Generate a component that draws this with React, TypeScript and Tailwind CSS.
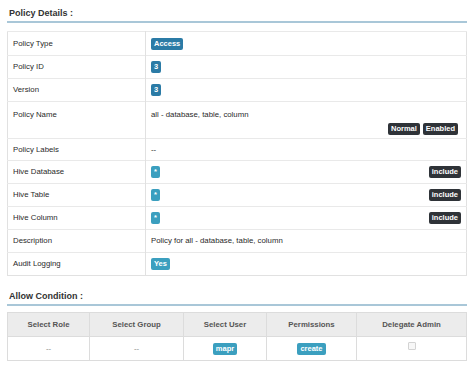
import React from "react";

const Badge = ({ children, tone }: { children: React.ReactNode; tone: "blue" | "teal" | "dark" }) => {
  const cls =
    tone === "blue" ? "bg-[#2b7ba6]" : tone === "teal" ? "bg-[#3b9fbf]" : "bg-[#2f3338]";
  return (
    <span className={`${cls} inline-block rounded-[2px] px-[3px] py-[2px] text-[7.5px] font-bold leading-[8px] text-white`}>
      {children}
    </span>
  );
};

type Row = { label: string; value: React.ReactNode; h: string; top?: boolean };

export default function App() {
  const rows: Row[] = [
    { label: "Policy Type", value: <Badge tone="blue">Access</Badge>, h: "h-[24px]" },
    { label: "Policy ID", value: <Badge tone="blue">3</Badge>, h: "h-[23px]" },
    { label: "Version", value: <Badge tone="blue">3</Badge>, h: "h-[23px]" },
    {
      label: "Policy Name",
      value: (
        <div className="flex flex-col">
          <span>all - database, table, column</span>
          <div className="mt-[2px] flex justify-end gap-[3px] pr-[3px]">
            <Badge tone="dark">Normal</Badge>
            <Badge tone="dark">Enabled</Badge>
          </div>
        </div>
      ),
      h: "h-[37px]",
      top: true,
    },
    { label: "Policy Labels", value: <span>--</span>, h: "h-[22px]" },
    {
      label: "Hive Database",
      value: (
        <div className="flex items-center justify-between">
          <Badge tone="teal">*</Badge>
          <Badge tone="dark">include</Badge>
        </div>
      ),
      h: "h-[23px]",
    },
    {
      label: "Hive Table",
      value: (
        <div className="flex items-center justify-between">
          <Badge tone="teal">*</Badge>
          <Badge tone="dark">include</Badge>
        </div>
      ),
      h: "h-[23px]",
    },
    {
      label: "Hive Column",
      value: (
        <div className="flex items-center justify-between">
          <Badge tone="teal">*</Badge>
          <Badge tone="dark">include</Badge>
        </div>
      ),
      h: "h-[23px]",
    },
    { label: "Description", value: <span>Policy for all - database, table, column</span>, h: "h-[23px]" },
    { label: "Audit Logging", value: <Badge tone="teal">Yes</Badge>, h: "h-[23px]" },
  ];

  return (
    <div className="min-h-[366px] w-[474px] bg-white px-[7px] pt-[7px] text-[7.8px] text-[#2a2a2a] [font-family:'Liberation_Sans',Arial,sans-serif]">
      {/* Policy details */}
      <h3 className="border-b-2 border-[#a9c7d8] pb-[2px] pl-[2px] text-[9px] font-bold leading-[12px] text-[#333]">
        Policy Details :
      </h3>
      <table className="mt-[8px] w-full border-collapse border border-[#e1e1e1]">
        <tbody>
          {rows.map((r) => (
            <tr key={r.label} className={`${r.h} border-t border-[#e9e9e9]`}>
              <td
                className={`w-[138px] border-r border-[#e1e1e1] px-[5px] ${r.top ? "pt-[7px] align-top" : "align-middle"}`}
              >
                {r.label}
              </td>
              <td className={`px-[5px] ${r.top ? "pt-[7px] align-top" : "align-middle"}`}>{r.value}</td>
            </tr>
          ))}
        </tbody>
      </table>

      {/* Allow condition */}
      <h3 className="mt-[14px] border-b-2 border-[#a9c7d8] pb-[2px] pl-[2px] text-[9px] font-bold leading-[12px] text-[#333]">
        Allow Condition :
      </h3>
      <table className="mt-[6px] w-full border-collapse border border-[#dcdcdc] text-center">
        <thead>
          <tr className="h-[24px] bg-[#ececec] text-[#555]">
            <th className="w-[82px] border-r border-[#dcdcdc] font-bold">Select Role</th>
            <th className="w-[94px] border-r border-[#dcdcdc] font-bold">Select Group</th>
            <th className="w-[83px] border-r border-[#dcdcdc] font-bold">Select User</th>
            <th className="w-[90px] border-r border-[#dcdcdc] font-bold">Permissions</th>
            <th className="font-bold">Delegate Admin</th>
          </tr>
        </thead>
        <tbody>
          <tr className="h-[24px] border-t border-[#dcdcdc]">
            <td className="border-r border-[#dcdcdc] text-[#888]">--</td>
            <td className="border-r border-[#dcdcdc] text-[#888]">--</td>
            <td className="border-r border-[#dcdcdc]">
              <Badge tone="teal">mapr</Badge>
            </td>
            <td className="border-r border-[#dcdcdc]">
              <Badge tone="teal">create</Badge>
            </td>
            <td className="pt-[5px] align-top">
              <span className="inline-block h-[8px] w-[8px] rounded-[1px] border border-[#d3d3d3] bg-[#f7f7f7]" />
            </td>
          </tr>
        </tbody>
      </table>
    </div>
  );
}
